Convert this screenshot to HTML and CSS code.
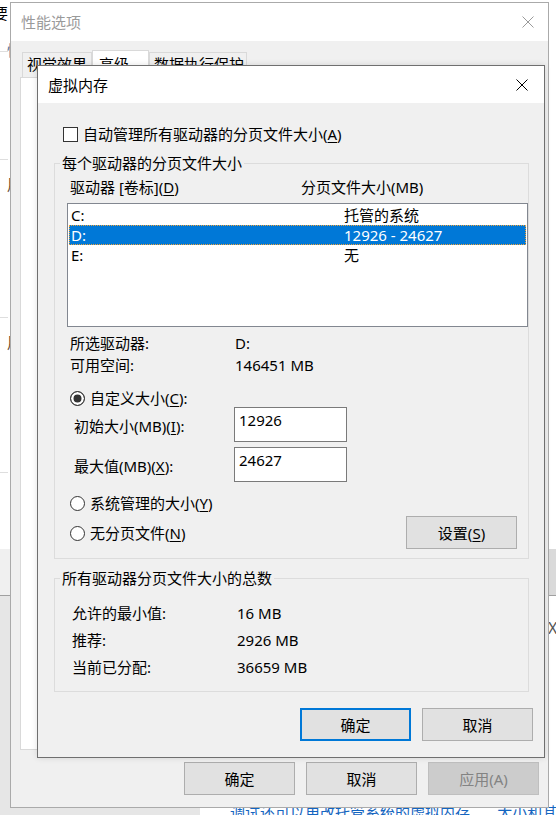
FILE: index.html
```html
<!DOCTYPE html>
<html lang="zh-CN">
<head>
<meta charset="utf-8">
<title>虚拟内存</title>
<link rel="stylesheet" href="styles.css">
</head>
<body>
<div class="bgwin">
  <div class="bg-top">
    <div class="bg-list">
      <div class="bg-item h0"><span class="bg-frag f0">要</span></div>
      <div class="bg-item h1"><span class="bg-frag f1">性</span></div>
      <div class="bg-item h2"><span class="bg-frag f2">用</span></div>
      <div class="bg-item h3"><span class="bg-frag f2">用</span></div>
      <div class="bg-item h4"></div>
    </div>
    <div class="bg-fill"></div>
  </div>
  <div class="bg-mid"><div class="bg-mid-block"></div></div>
  <div class="bg-bottom">
    <div class="bg-side"></div>
    <div class="bg-main">
      <div class="bg-x">X</div>
      <div class="bg-link">调试还可以更改托管系统的虚拟内存 &nbsp; &nbsp; &nbsp; 大小和其他的设置</div>
    </div>
  </div>
</div>

<div class="perf">
  <div class="perf-title">
    <span>性能选项</span>
    <svg class="xicon" width="12" height="12" viewBox="0 0 12 12"><path d="M0.5 0.5 L11.5 11.5 M11.5 0.5 L0.5 11.5" stroke="#9a9a9a" stroke-width="1" fill="none"/></svg>
  </div>
  <div class="tabs">
    <div class="tab t1">视觉效果</div>
    <div class="tab t2 active">高级</div>
    <div class="tab t3">数据执行保护</div>
  </div>
  <div class="panel"></div>
  <div class="perf-btns">
    <div class="btn">确定</div>
    <div class="btn">取消</div>
    <div class="btn disabled">应用(A)</div>
  </div>
</div>

<div class="vm">
  <div class="vm-title">
    <span>虚拟内存</span>
    <svg class="xicon" width="12" height="12" viewBox="0 0 12 12"><path d="M0.5 0.5 L11.5 11.5 M11.5 0.5 L0.5 11.5" stroke="#000" stroke-width="1" fill="none"/></svg>
  </div>
  <div class="vm-body">
    <div class="chk-row">
      <span class="checkbox"></span>
      <span>自动管理所有驱动器的分页文件大小(<u>A</u>)</span>
    </div>

    <fieldset class="group g1">
      <legend>每个驱动器的分页文件大小</legend>
      <div class="cols">
        <span class="col1">驱动器 [卷标](<u>D</u>)</span>
        <span>分页文件大小(MB)</span>
      </div>
      <div class="listbox">
        <div class="lrow"><span class="lc1">C:</span><span>托管的系统</span></div>
        <div class="lrow sel"><span class="lc1">D:</span><span>12926 - 24627</span></div>
        <div class="lrow"><span class="lc1">E:</span><span>无</span></div>
      </div>
      <div class="info-row first"><span class="ilabel">所选驱动器:</span><span>D:</span></div>
      <div class="info-row"><span class="ilabel">可用空间:</span><span>146451 MB</span></div>

      <div class="radio-row r1"><span class="radio on"></span><span>自定义大小(<u>C</u>):</span></div>
      <div class="field-row">
        <span class="flabel">初始大小(MB)(<u>I</u>):</span>
        <div class="input">12926</div>
      </div>
      <div class="field-row f2">
        <span class="flabel">最大值(MB)(<u>X</u>):</span>
        <div class="input">24627</div>
      </div>
      <div class="radio-row r2"><span class="radio"></span><span>系统管理的大小(<u>Y</u>)</span></div>
      <div class="last-row">
        <div class="radio-inline"><span class="radio"></span><span>无分页文件(<u>N</u>)</span></div>
        <div class="btn">设置(<u>S</u>)</div>
      </div>
    </fieldset>

    <fieldset class="group g2">
      <legend>所有驱动器分页文件大小的总数</legend>
      <div class="sum-row s1"><span class="slabel">允许的最小值:</span><span>16 MB</span></div>
      <div class="sum-row s2"><span class="slabel">推荐:</span><span>2926 MB</span></div>
      <div class="sum-row s3"><span class="slabel">当前已分配:</span><span>36659 MB</span></div>
    </fieldset>

    <div class="vm-btns">
      <div class="btn focus">确定</div>
      <div class="btn">取消</div>
    </div>
  </div>
</div>
</body>
</html>
```

FILE: styles.css
```css
* { box-sizing: border-box; }
html, body { margin: 0; padding: 0; }
body {
  width: 556px;
  height: 815px;
  overflow: hidden;
  position: relative;
  background: #fff;
  font-family: "Noto Sans", "Noto Sans CJK SC", "Microsoft YaHei", sans-serif;
  font-size: 15px;
  line-height: 20px;
  color: #000;
}
u { text-underline-offset: 2px; text-decoration-thickness: 1px; }

/* background window */
.bgwin {
  position: absolute;
  left: 0; top: 0;
  width: 556px; height: 815px;
  display: flex;
  flex-direction: column;
}
.bg-top { height: 549px; display: flex; }
.bg-list { width: 10px; overflow: hidden; }
.bg-item { border-bottom: 1px solid #dedede; width: 8px; overflow: visible; white-space: nowrap; }
.bg-item.h0 { height: 49px; }
.bg-item.h1 { height: 120px; }
.bg-item.h2 { height: 144px; }
.bg-item.h3 { height: 141px; }
.bg-item.h4 { border-bottom: none; height: 95px; }
.bg-frag { display: block; font-size: 15px; }
.bg-frag.f0 { margin-left: -7px; margin-top: 3px; }
.bg-frag.f1 { margin-left: 7px; margin-top: -12px; color: #3a5a8a; }
.bg-frag.f2 { margin-left: 7px; margin-top: 14px; color: #6a4a2a; }
.bg-fill { flex: 1; }
.bg-mid {
  height: 59px;
  background: #f0f0f0;
  border-bottom: 1px solid #a0a0a0;
  display: flex;
  justify-content: flex-end;
}
.bg-mid-block { width: 8px; height: 46px; background: #dadada; }
.bg-bottom { flex: 1; display: flex; }
.bg-side { width: 200px; background: #e6e6e6; }
.bg-main { flex: 1; background: #fff; display: flex; flex-direction: column; overflow: hidden; }
.bg-x { align-self: flex-end; width: 8px; overflow: hidden; margin-top: 22px; color: #555; font-size: 16px; }
.bg-link { margin-top: 164px; padding-left: 30px; color: #1565c0; white-space: nowrap; }

/* performance options dialog */
.perf {
  position: absolute;
  left: 10px; top: 2px;
  width: 539px; height: 806px;
  border: 1px solid #aaaaaa;
  background: #f0f0f0;
  display: flex;
  flex-direction: column;
}
.perf-title {
  height: 38px;
  background: #fff;
  color: #9a9a9a;
  display: flex;
  align-items: center;
  justify-content: space-between;
  padding: 0 14px 0 10px;
  flex-shrink: 0;
}
.tabs {
  display: flex;
  align-items: flex-end;
  margin: 9px 0 0 11px;
  height: 27px;
  flex-shrink: 0;
}
.tab {
  height: 25px;
  border: 1px solid #d9d9d9;
  border-bottom: none;
  background: #f0f0f0;
  padding: 1px 0 0 4px;
  white-space: nowrap;
  overflow: hidden;
}
.tab.t1 { width: 70px; }
.tab.t2 { width: 57px; }
.tab.t3 { width: 98px; }
.tab.active { height: 27px; background: #fff; padding: 3px 0 0 6px; }
.panel {
  margin-left: 9px;
  width: 519px;
  height: 673px;
  background: #fff;
  border: 1px solid #d9d9d9;
  flex-shrink: 0;
}
.perf-btns {
  display: flex;
  justify-content: flex-end;
  gap: 11px;
  margin-top: 12px;
  padding-right: 9px;
}

.btn {
  width: 111px;
  height: 33px;
  background: #e1e1e1;
  border: 1px solid #adadad;
  display: flex;
  align-items: center;
  justify-content: center;
  white-space: nowrap;
}
.btn.disabled { background: #cccccc; border-color: #bfbfbf; color: #838383; }
.btn.focus { border: 2px solid #0078d7; }

/* virtual memory dialog */
.vm {
  position: absolute;
  left: 37px; top: 65px;
  width: 508px; height: 693px;
  border: 1px solid #6f6f6f;
  background: #f0f0f0;
  display: flex;
  flex-direction: column;
  box-shadow: 0 0 6px rgba(0,0,0,0.12);
}
.vm-title {
  height: 37px;
  background: #fff;
  display: flex;
  align-items: center;
  justify-content: space-between;
  padding: 0 16px 0 10px;
  flex-shrink: 0;
}
.vm-body { display: flex; flex-direction: column; }
.chk-row {
  margin-top: 21px;
  height: 20px;
  padding-left: 25px;
  display: flex;
  align-items: center;
  gap: 5px;
}
.checkbox {
  width: 15px; height: 15px;
  border: 1px solid #333;
  background: #fff;
  flex-shrink: 0;
  margin-top: 1px;
}

.group {
  margin: 9px 15px 0 16px;
  padding: 0 0 9px 0;
  border: 1px solid #dcdcdc;
  min-width: 0;
}
.group legend {
  padding: 0 2px;
  margin-left: 5px;
  line-height: 20px;
}
.cols { display: flex; margin-top: 4px; padding-left: 15px; height: 20px; }
.col1 { width: 231px; }
.listbox {
  margin: 6px 0 0 12px;
  width: 461px;
  height: 124px;
  border: 1px solid #828790;
  background: #fff;
  padding: 1px;
}
.lrow { display: flex; height: 20px; padding-left: 2px; white-space: nowrap; }
.lc1 { width: 273px; }
.lrow.sel {
  background: #0078d7;
  color: #fff;
  outline: 1px dotted #f0a33a;
  outline-offset: -1px;
}
.info-row { display: flex; height: 20px; padding-left: 15px; margin-top: 2px; }
.info-row.first { margin-top: 6px; }
.ilabel { width: 165px; }

.radio-row {
  display: flex;
  align-items: center;
  gap: 5px;
  padding-left: 15px;
  height: 18px;
}
.radio-row.r1 { margin-top: 14px; }
.radio-row.r2 { margin-top: 12px; }
.radio {
  width: 15px; height: 15px;
  border-radius: 50%;
  border: 1px solid #333;
  background: #fff;
  flex-shrink: 0;
  margin-top: 1px;
}
.radio.on { background: #333; box-shadow: inset 0 0 0 2.5px #fff; }
.field-row { display: flex; align-items: center; padding-left: 19px; }
.field-row.f2 { margin-top: 5px; }
.flabel { width: 160px; margin-top: 2px; }
.input {
  width: 113px;
  height: 35px;
  border: 1px solid #7a7a7a;
  background: #fff;
  padding: 2px 4px;
}
.last-row {
  margin-top: 4px;
  height: 33px;
  display: flex;
  align-items: center;
  justify-content: space-between;
  padding: 0 11px 0 15px;
}
.radio-inline { display: flex; align-items: center; gap: 5px; }

.g2 { padding-bottom: 14px; }
.sum-row { display: flex; height: 20px; padding-left: 17px; }
.sum-row.s1 { margin-top: 15px; }
.sum-row.s2 { margin-top: 7px; }
.sum-row.s3 { margin-top: 7px; }
.slabel { width: 165px; }

.vm-btns {
  display: flex;
  justify-content: flex-end;
  gap: 11px;
  margin-top: 16px;
  padding-right: 11px;
}
```
